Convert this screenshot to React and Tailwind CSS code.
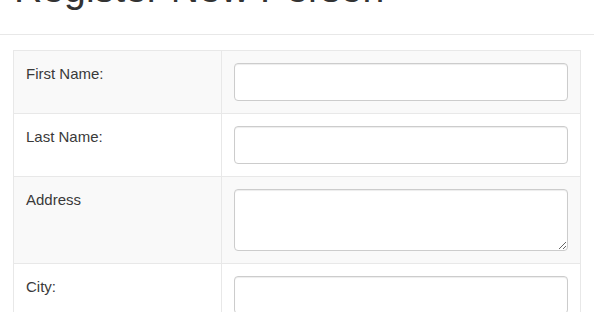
export default function App() {
  const rows = [
    { label: "First Name:", type: "input" },
    { label: "Last Name:", type: "input" },
    { label: "Address", type: "textarea" },
    { label: "City:", type: "input" },
  ];
  return (
    <div className="w-[594px] h-[312px] overflow-hidden bg-white text-[#333]" style={{ fontFamily: '"Liberation Sans", Arial, sans-serif' }}>
      <div className="border-b border-[#e8e8e8]">
        <h1 className="mt-[-32px] pb-[24px] pl-[14px] text-[39.2px] leading-[42px] font-normal text-[#333] whitespace-nowrap">
          Register New Person
        </h1>
      </div>
      <div className="pl-[13px] pt-[15px]">
        <table className="w-[568px] table-fixed border-collapse border border-[#e8e8e8]">
          <colgroup>
            <col className="w-[208px]" />
            <col />
          </colgroup>
          <tbody>
            {rows.map((r, i) => (
              <tr key={r.label} className={i % 2 === 0 ? "bg-[#f9f9f9]" : "bg-white"}>
                <td className="border border-[#e8e8e8] p-[12px] align-top text-[15px] leading-[22px] font-normal text-[#3a3a3a]">
                  {r.label}
                </td>
                <td className="border border-[#e8e8e8] p-[12px] align-top">
                  {r.type === "input" ? (
                    <input
                      type="text"
                      className="block w-full h-[38px] rounded-[4px] border border-[#ccc] bg-white shadow-[inset_0_1px_1px_rgba(0,0,0,0.075)] outline-none"
                    />
                  ) : (
                    <textarea className="block w-full h-[62px] rounded-[4px] border border-[#ccc] bg-white shadow-[inset_0_1px_1px_rgba(0,0,0,0.075)] outline-none" />
                  )}
                </td>
              </tr>
            ))}
          </tbody>
        </table>
      </div>
    </div>
  );
}
